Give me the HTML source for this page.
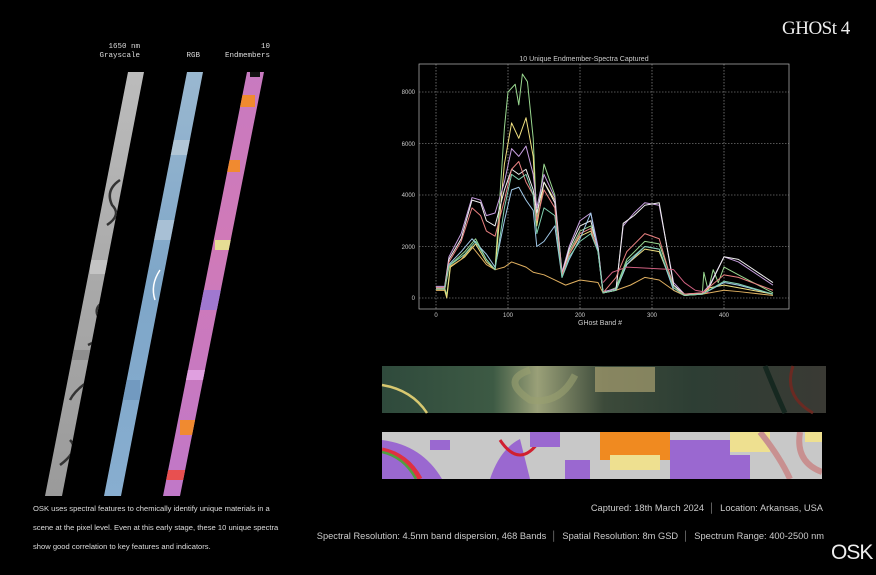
<!DOCTYPE html>
<html><head><meta charset="utf-8"><style>
html,body{margin:0;padding:0;background:#000;}
body{width:876px;height:575px;position:relative;overflow:hidden;font-family:"Liberation Sans",sans-serif;color:#ddd;}
.t{position:absolute;white-space:nowrap;}
.mono{font-family:"Liberation Mono",monospace;font-size:7.5px;color:#ddd;text-align:right;line-height:9px;}
</style></head><body>
<svg width="876" height="575" style="position:absolute;left:0;top:0">
<defs>
<linearGradient id="gg" x1="0" y1="0" x2="0" y2="1"><stop offset="0" stop-color="#bcbcbc"/><stop offset=".5" stop-color="#a9a9a9"/><stop offset="1" stop-color="#9a9a9a"/></linearGradient>
<linearGradient id="bg" x1="0" y1="0" x2="0" y2="1"><stop offset="0" stop-color="#9ab8d0"/><stop offset=".5" stop-color="#7ea6c8"/><stop offset="1" stop-color="#88aed0"/></linearGradient>
<linearGradient id="pg" x1="0" y1="0" x2="0" y2="1"><stop offset="0" stop-color="#c87ac0"/><stop offset=".4" stop-color="#d07ab8"/><stop offset="1" stop-color="#c078c8"/></linearGradient>
<linearGradient id="rg" x1="0" y1="0" x2="1" y2="0"><stop offset="0" stop-color="#2f4a3c"/><stop offset=".25" stop-color="#3d5a44"/><stop offset=".35" stop-color="#9aa078"/><stop offset=".5" stop-color="#3c4a3a"/><stop offset=".7" stop-color="#2d3e34"/><stop offset="1" stop-color="#3a3a34"/></linearGradient>
<clipPath id="c1"><polygon points="128,72 144,72 62,496 45,496"/></clipPath>
<clipPath id="c2"><polygon points="187,72 203,72 121,496 104,496"/></clipPath>
<clipPath id="c3"><polygon points="247,72 264,72 180,496 163,496"/></clipPath>
<clipPath id="c4"><rect x="382" y="432" width="440" height="47"/></clipPath>
</defs>
<g clip-path="url(#c1)"><rect x="40" y="70" width="110" height="430" fill="url(#gg)"/>
<path d="M120 180 q-15 10 -8 25 q10 10 -5 20 M110 300 q-20 5 -10 20 q10 15 -12 25 M90 380 q-15 10 -20 20 M70 440 q10 10 -10 25" stroke="#333" stroke-width="2.5" fill="none"/>
<rect x="90" y="260" width="20" height="14" fill="#ddd" opacity=".5"/><rect x="70" y="350" width="20" height="10" fill="#777" opacity=".5"/></g>
<g clip-path="url(#c2)"><rect x="100" y="70" width="110" height="430" fill="url(#bg)"/>
<rect x="170" y="140" width="25" height="15" fill="#c8d4dc" opacity=".6"/><rect x="150" y="220" width="25" height="20" fill="#c0cedc" opacity=".6"/><path d="M160 270 q-10 15 -5 30" stroke="#fff" stroke-width="1.5" fill="none"/><rect x="120" y="380" width="20" height="20" fill="#6890b8" opacity=".6"/></g>
<g clip-path="url(#c3)"><rect x="160" y="70" width="110" height="430" fill="url(#pg)"/>
<rect x="240" y="95" width="15" height="12" fill="#f08a30"/><rect x="220" y="160" width="20" height="12" fill="#f08a30"/><rect x="215" y="240" width="25" height="10" fill="#e8e890" opacity=".9"/><rect x="200" y="290" width="30" height="20" fill="#a078d0"/><rect x="180" y="420" width="20" height="15" fill="#f08a30"/><rect x="185" y="370" width="20" height="10" fill="#e0a0e0"/><rect x="165" y="470" width="20" height="10" fill="#e85050"/><rect x="250" y="72" width="10" height="5" fill="#111"/></g>
<rect x="382" y="366" width="444" height="47" fill="url(#rg)"/>
<path d="M382 385 q30 5 45 28" stroke="#d8c870" stroke-width="2.5" fill="none"/>
<path d="M530 370 q-30 10 0 30 q30 5 45 -25" stroke="#9aa070" stroke-width="7" fill="none" opacity=".6"/>
<rect x="595" y="367" width="60" height="25" fill="#a8a070" opacity=".7"/>
<path d="M765 366 q10 25 20 47" stroke="#162820" stroke-width="5" fill="none"/>
<path d="M793 366 q-10 30 20 47" stroke="#6a2a22" stroke-width="3" fill="none"/>
<g clip-path="url(#c4)"><rect x="382" y="432" width="440" height="47" fill="#c8c8c8"/>
<path d="M382 440 q40 5 60 39 h-60z" fill="#9a68d0"/><path d="M382 450 q25 5 38 29" stroke="#e03040" stroke-width="5" fill="none"/><path d="M382 452 q22 5 34 27" stroke="#50a040" stroke-width="2.5" fill="none"/>
<path d="M490 479 q10 -30 30 -40 l10 40z" fill="#9a68d0"/><path d="M500 440 q20 30 40 0" stroke="#d02030" stroke-width="3" fill="none"/>
<rect x="530" y="432" width="30" height="15" fill="#9a68d0"/><rect x="600" y="432" width="70" height="28" fill="#f08a20"/><rect x="610" y="455" width="50" height="15" fill="#eee090"/>
<rect x="670" y="440" width="60" height="39" fill="#9a68d0"/><rect x="730" y="432" width="40" height="20" fill="#eee090"/><rect x="720" y="455" width="30" height="24" fill="#9a68d0"/>
<path d="M760 432 q20 25 30 47" stroke="#c89090" stroke-width="6" fill="none"/><path d="M800 432 q-5 30 22 40" stroke="#c89090" stroke-width="6" fill="none"/>
<rect x="805" y="432" width="17" height="10" fill="#eee090"/><rect x="430" y="440" width="20" height="10" fill="#9a68d0"/><rect x="565" y="460" width="25" height="19" fill="#9a68d0"/></g>
<rect x="419" y="64" width="370" height="245" fill="#000" stroke="#bbb" stroke-width="0.7"/>
<g stroke="#aaa" stroke-width="0.6" stroke-dasharray="1.5,1.5">
<line x1="436" y1="64" x2="436" y2="309"/><line x1="508" y1="64" x2="508" y2="309"/><line x1="580" y1="64" x2="580" y2="309"/><line x1="652" y1="64" x2="652" y2="309"/><line x1="724" y1="64" x2="724" y2="309"/>
<line x1="419" y1="298" x2="789" y2="298"/><line x1="419" y1="246.5" x2="789" y2="246.5"/><line x1="419" y1="195" x2="789" y2="195"/><line x1="419" y1="143.5" x2="789" y2="143.5"/><line x1="419" y1="92" x2="789" y2="92"/>
</g>
<g font-family="Liberation Sans" font-size="6" fill="#ccc">
<text x="584" y="61" text-anchor="middle" font-size="7">10 Unique Endmember-Spectra Captured</text>
<text x="415" y="300" text-anchor="end">0</text><text x="415" y="249" text-anchor="end">2000</text><text x="415" y="197" text-anchor="end">4000</text><text x="415" y="146" text-anchor="end">6000</text><text x="415" y="94" text-anchor="end">8000</text>
<text x="436" y="317" text-anchor="middle">0</text><text x="508" y="317" text-anchor="middle">100</text><text x="580" y="317" text-anchor="middle">200</text><text x="652" y="317" text-anchor="middle">300</text><text x="724" y="317" text-anchor="middle">400</text>
<text x="600" y="325" text-anchor="middle" font-size="7">GHost Band #</text>
</g>
<g transform="translate(436,298) scale(0.72,-0.02575)" fill="none" stroke-width="1" stroke-linejoin="round">
<polyline vector-effect="non-scaling-stroke" stroke="#9ad890" points="0,400 12,400 15,100 20,1300 40,1800 55,2300 70,1500 82,1100 95,6600 100,8000 110,8300 115,7500 120,8700 127,8400 135,6200 140,3000 150,5200 165,4000 175,1000 185,1800 200,2600 215,2800 225,2000 232,200 250,400 265,1500 290,2200 310,2100 330,500 345,100 370,200 372,1000 378,300 385,1100 392,600 400,1200 420,900 468,200"/>
<polyline vector-effect="non-scaling-stroke" stroke="#f0e080" points="0,300 12,300 15,0 20,1200 40,1600 55,2100 70,1400 82,1100 95,5200 105,6800 115,6200 125,7000 135,5500 140,2800 150,4500 165,3800 175,900 185,1700 200,2400 215,2600 225,1900 232,200 250,300 265,1300 290,1900 310,1800 330,400 345,100 370,150 380,400 400,500 420,400 468,150"/>
<polyline vector-effect="non-scaling-stroke" stroke="#c8a0e0" points="0,450 12,450 18,1600 35,2500 50,3900 62,3800 70,3200 82,3300 95,4500 105,5800 115,5500 125,5900 135,4800 140,3500 150,4800 165,3900 175,1000 185,2000 200,3000 215,3300 225,2000 232,250 250,350 260,2800 275,3300 290,3700 310,3600 330,600 345,150 370,200 380,500 400,1600 420,1400 468,500"/>
<polyline vector-effect="non-scaling-stroke" stroke="#f0f0f0" points="0,400 12,400 18,1500 35,2300 50,3800 62,3700 70,3000 82,2800 95,4200 105,5000 115,4800 125,5000 135,4200 140,3300 150,4500 165,3700 175,900 185,1900 200,2800 215,3000 225,1900 232,200 250,300 260,2900 275,3200 290,3600 310,3700 330,500 345,150 370,180 380,450 400,1600 420,1500 468,600"/>
<polyline vector-effect="non-scaling-stroke" stroke="#e88080" points="0,400 12,400 18,1400 35,2200 50,3500 62,3200 70,2600 82,2400 95,3800 105,5000 115,5300 125,4500 135,4000 140,3000 150,4200 165,3500 175,900 185,1700 200,2500 215,2700 225,1800 232,200 250,800 265,1800 290,2500 310,2300 330,400 345,150 370,200 400,900 420,800 468,300"/>
<polyline vector-effect="non-scaling-stroke" stroke="#a0c8e8" points="0,350 12,350 18,1300 35,1800 50,2300 70,1700 82,1200 95,3000 105,4200 115,4300 125,3800 135,3400 140,2000 150,2200 165,2800 175,800 185,1500 200,2300 215,3300 225,1800 232,200 250,300 265,1300 290,2000 310,1900 330,300 345,100 370,150 400,600 420,500 468,150"/>
<polyline vector-effect="non-scaling-stroke" stroke="#e0b060" points="0,300 12,300 18,1200 35,1500 50,2000 70,1300 82,1100 95,1200 105,1400 115,1300 125,1200 135,1000 150,900 165,700 180,500 200,700 225,600 232,200 250,300 270,500 290,800 310,700 330,300 345,100 370,150 400,300 420,250 468,100"/>
<polyline vector-effect="non-scaling-stroke" stroke="#d06080" points="232,600 245,1000 255,1100 265,1200 330,1100 345,600 360,300 380,200"/>
<polyline vector-effect="non-scaling-stroke" stroke="#80d0b0" points="0,350 12,350 18,1250 40,1700 55,2200 70,1500 82,1100 95,3500 105,4800 115,4600 125,4800 135,4000 140,2500 150,3500 165,3200 175,800 185,1600 200,2200 215,2500 225,1800 232,200 250,300 265,1400 290,2000 310,1900 330,400 345,100 370,150 400,650 420,550 468,150"/>
</g>
</svg>
<div class="t mono" style="left:90px;top:43px;width:50px">1650 nm<br>Grayscale</div>
<div class="t mono" style="left:170px;top:52px;width:30px">RGB</div>
<div class="t mono" style="left:220px;top:43px;width:50px">10<br>Endmembers</div>
<div class="t" style="left:782px;top:18px;font-family:'Liberation Serif',serif;font-size:19px;color:#eee;letter-spacing:-0.5px">GHOSt 4</div>
<div class="t" style="left:33px;top:500px;font-size:7.6px;line-height:18.8px;color:#ddd">OSK uses spectral features to chemically identify unique materials in a<br>scene at the pixel level. Even at this early stage, these 10 unique spectra<br>show good correlation to key features and indicators.</div>
<div class="t" style="right:53px;top:503px;font-size:9.3px;color:#ccc">Captured: 18th March 2024 &nbsp;<span style="color:#888">│</span>&nbsp; Location: Arkansas, USA</div>
<div class="t" style="right:52px;top:531px;font-size:9.3px;color:#ccc">Spectral Resolution: 4.5nm band dispersion, 468 Bands &nbsp;<span style="color:#888">│</span>&nbsp; Spatial Resolution: 8m GSD &nbsp;<span style="color:#888">│</span>&nbsp; Spectrum Range: 400-2500 nm</div>
<div class="t" style="left:831px;top:541px;font-size:21px;color:#eee;letter-spacing:-1px;font-weight:300">OSK</div>
</body></html>
